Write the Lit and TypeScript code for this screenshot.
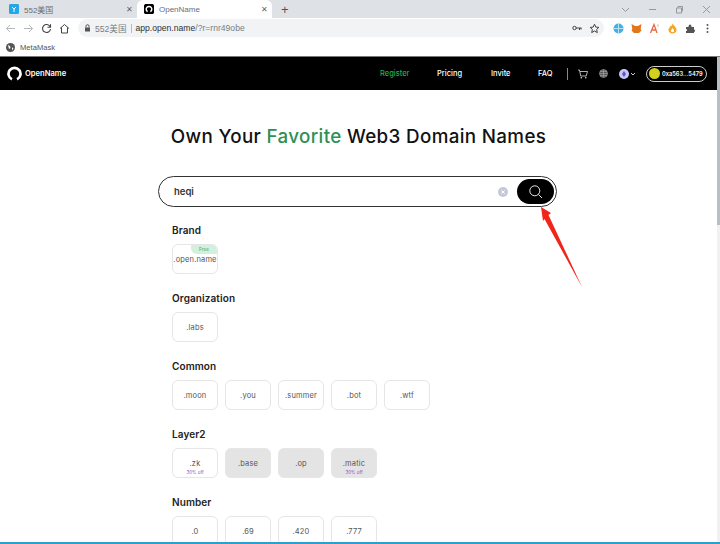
import { LitElement, html, css } from "lit";
import { customElement } from "lit/decorators.js";

type Chip = { n: string; free?: boolean; off?: boolean; dim?: boolean };
const sections: { t: string; chips: Chip[] }[] = [
  { t: "Brand", chips: [{ n: ".open.name", free: true }] },
  { t: "Organization", chips: [{ n: ".labs" }] },
  { t: "Common", chips: [{ n: ".moon" }, { n: ".you" }, { n: ".summer" }, { n: ".bot" }, { n: ".wtf" }] },
  { t: "Layer2", chips: [{ n: ".zk", off: true }, { n: ".base", dim: true }, { n: ".op", dim: true }, { n: ".matic", off: true, dim: true }] },
  { t: "Number", chips: [{ n: ".0" }, { n: ".69" }, { n: ".420" }, { n: ".777" }] },
];

@customElement("app-root")
export class AppRoot extends LitElement {
  static styles = css`
    :host { display: block; width: 720px; height: 544px; position: relative; overflow: hidden; background: #fff; font-family: "Inter", "Liberation Sans", sans-serif; }
    .page { height: 544px; display: flex; flex-direction: column; }
    .tabs { height: 18px; background: #dee1e6; display: flex; align-items: stretch; font: 8px "Liberation Sans", "Noto Sans CJK SC", sans-serif; color: #6b6f74; }
    .tab { width: 137px; display: flex; align-items: center; box-sizing: border-box; padding: 0 3px 0 9px; gap: 5px; }
    .tab.active { background: #fff; border-radius: 6px 6px 0 0; width: 135px; padding: 0 3px 0 7px; gap: 5px; }
    .tab .name { flex: 1; }
    .tab .x { font-size: 8px; color: #666; width: 10px; text-align: center; }
    .fav { width: 10px; height: 10px; border-radius: 1px; flex: none; display: block; }
    .plus { margin: 0 0 0 9px; align-self: center; font-size: 13px; color: #555; line-height: 13px; }
    .win { margin-left: auto; display: flex; align-items: center; gap: 18px; padding-right: 9px; }
    .toolbar { height: 20px; background: #fff; display: flex; align-items: center; padding-left: 5px; box-sizing: border-box; }
    .nav { display: flex; align-items: center; gap: 7px; width: 72px; flex: none; }
    .nav svg { display: block; }
    .omni { width: 168px; flex: 1; height: 18px; margin-left: 1px; background: #f1f3f4; border-radius: 9px; display: flex; align-items: center; padding: 0 4px 0 6px; font: 8.6px "Liberation Sans", "Noto Sans CJK SC", sans-serif; color: #7a7e83; }
    .omni b { font-weight: 400; color: #303134; }
    .sep { width: 1px; height: 9px; background: #bbb; margin: 0 4px; }
    .lock { margin-right: 4px; }
    .right { margin-left: auto; display: flex; align-items: center; gap: 7px; }
    .ext { display: flex; align-items: center; gap: 7px; padding: 0 8px 0 9px; }
    .ext svg { display: block; }
    .bm { height: 19px; display: flex; align-items: center; padding-left: 6px; gap: 5px; font: 7.6px "Liberation Sans", sans-serif; color: #555; box-sizing: border-box; border-bottom: 1px solid #777; }
    .body { flex: 1; min-height: 0; display: flex; overflow: hidden; }
    .col { flex: 1; min-width: 0; display: flex; flex-direction: column; }
    .scroll { width: 3px; flex: none; background: #f1f1f1; }
    .thumb { height: 168px; background: #b6bec6; }
    header { height: 33px; flex: none; background: #000; display: flex; align-items: center; color: #fff; padding: 0 10px 0 7px; font-weight: 500; }
    .logo { display: flex; align-items: center; gap: 3px; font-size: 7.6px; font-weight: 600; }
    .menu { margin-left: auto; display: flex; align-items: center; font-size: 7.5px; }
    .menu a { display: block; }
    .reg { color: #22b14c; width: 30px; margin-right: 27px; }
    .pri { width: 26px; margin-right: 28px; }
    .inv { width: 20px; margin-right: 27px; }
    .faq { width: 16px; margin-right: 13px; }
    .bar { width: 1px; height: 12px; background: #888; margin-right: 10px; }
    .wallet { margin-left: 10px; width: 57px; height: 14px; border: 1px solid #ccc; border-radius: 8px; display: flex; align-items: center; gap: 2px; font-size: 5.7px; font-weight: 600; padding-left: 2px; box-sizing: content-box; white-space: nowrap; }
    .coin { width: 11px; height: 11px; border-radius: 50%; background: #d3cf1f; flex: none; }
    .chain { display: flex; align-items: center; gap: 1px; margin-left: 11px; }
    .cart { margin-right: 11px; display: block; }
    main { flex: 1; min-height: 0; overflow: hidden; display: flex; flex-direction: column; }
    h1 { flex: none; margin: 35px 0 0; height: 24px; line-height: 24px; text-align: center; font-size: 18.8px; font-weight: 500; color: #111; letter-spacing: 0.35px; white-space: nowrap; }
    h1 span { color: #2f8f57; }
    .search { flex: none; margin: 27px 0 0 158px; width: 399px; height: 31px; box-sizing: border-box; border: 1px solid #333; border-radius: 16px; display: flex; align-items: center; padding: 0 2px 0 15px; }
    .q { flex: 1; font-size: 9.5px; font-weight: 600; color: #333; }
    .clear { display: block; margin-right: 9px; }
    .go { width: 37px; height: 25px; border-radius: 13px; background: #000; display: flex; align-items: center; justify-content: center; }
    .secs { flex: none; margin: 16px 0 0 172px; display: flex; flex-direction: column; gap: 17px; }
    h2 { margin: 0 0 7px; font-size: 10px; line-height: 14px; font-weight: 600; color: #222; letter-spacing: 0.1px; }
    .chips { display: flex; gap: 7px; }
    .chip { width: 46px; height: 30px; flex: none; box-sizing: border-box; border: 1px solid #e6e6e6; border-radius: 6px; display: flex; flex-direction: column; align-items: center; justify-content: center; font-size: 7.5px; letter-spacing: 0.15px; color: #555; position: relative; background: #fff; white-space: nowrap; }
    .chip.dim { background: #e4e4e4; }
    .free { position: absolute; top: 0; right: 0; width: 26px; height: 9px; background: #d3efdd; border-radius: 0 5px 0 6px; color: #3aa76d; font-size: 4.5px; line-height: 9px; text-align: center; }
    .off { position: absolute; bottom: 1px; left: 0; right: 0; text-align: center; font-size: 4.5px; line-height: 6px; color: #8a4fc0; letter-spacing: 0; }
    .arrow { position: absolute; left: 538px; top: 205px; display: block; }
    .task { height: 2px; flex: none; background: #2a9fd0; }
  `;

  render() {
    return html`<div class="page">
      <div class="tabs">
        <div class="tab"><svg class="fav" viewBox="0 0 10 10"><rect width="10" height="10" rx="1" fill="#22a7e8"/><path d="M3 3l2 2 2-2M5 5v3" stroke="#fff" fill="none"/></svg><span class="name">552美国</span><span class="x">✕</span></div>
        <div class="tab active"><svg class="fav" viewBox="0 0 10 10"><rect width="10" height="10" rx="1.5" fill="#000"/><path d="M3.6 7.6A2.8 2.8 0 1 1 6.4 7.6" stroke="#fff" fill="none" stroke-width="1.5"/></svg><span class="name">OpenName</span><span class="x">✕</span></div>
        <span class="plus">+</span>
        <div class="win">
          <svg width="9" height="9" viewBox="0 0 9 9"><path d="M1 3l3.500 3.500L8 3" stroke="#999" fill="none"/></svg>
          <svg width="9" height="9" viewBox="0 0 9 9"><path d="M1 4.500h7" stroke="#999"/></svg>
          <svg width="9" height="9" viewBox="0 0 9 9"><path d="M1.500 3h5v5h-5zM3 3V1.500h4.500V6H6.500" stroke="#999" fill="none"/></svg>
          <svg width="9" height="9" viewBox="0 0 9 9"><path d="M1 1l7 7M8 1l-7 7" stroke="#999"/></svg>
        </div>
      </div>
      <div class="toolbar">
        <div class="nav">
          <svg width="11" height="11" viewBox="0 0 11 11"><path d="M10 5.500H1.500M5 2L1.500 5.500 5 9" stroke="#b5b8bc" fill="none"/></svg>
          <svg width="11" height="11" viewBox="0 0 11 11"><path d="M1 5.500h8.500M6 2l3.500 3.500L6 9" stroke="#b5b8bc" fill="none"/></svg>
          <svg width="11" height="11" viewBox="0 0 11 11"><path d="M9 3.500A4 4 0 1 0 9.500 6M9.500 1.200v3H6.500" stroke="#444" fill="none" stroke-width="1.100"/></svg>
          <svg width="11" height="11" viewBox="0 0 11 11"><path d="M1 5.500L5.500 1.500 10 5.500M2.500 4.500v5.500h6V4.500" stroke="#444" fill="none"/></svg>
        </div>
        <div class="omni">
          <svg class="lock" width="7" height="8" viewBox="0 0 7 8"><rect x="1" y="3.500" width="5" height="4" fill="#555"/><path d="M2 3.500V2.200a1.500 1.500 0 0 1 3 0V3.500" stroke="#555" fill="none"/></svg>
          <span>552美国</span><span class="sep"></span><span><b>app.open.name</b>/?r=rnr49obe</span>
          <span class="right">
            <svg width="10" height="8" viewBox="0 0 10 8"><circle cx="2.500" cy="4" r="1.700" stroke="#444" fill="none"/><path d="M4 4h5.500M7.500 4v2M9 4v1.500" stroke="#444"/></svg>
            <svg width="11" height="11" viewBox="0 0 11 11"><path d="M5.500 1.200l1.300 2.900 3.100.3-2.300 2.100.7 3.100-2.800-1.600-2.800 1.600.7-3.100L1.100 4.400l3.100-.3z" stroke="#444" fill="none"/></svg>
          </span>
        </div>
        <div class="ext">
          <svg width="11" height="11" viewBox="0 0 11 11"><circle cx="5.500" cy="5.500" r="5" fill="#47b0e0"/><path d="M.5 5.500h10M5.500.5v10" stroke="#cfeaf7" stroke-width=".8"/></svg>
          <svg width="11" height="11" viewBox="0 0 11 11"><path d="M.5 1l3.500 2h3L10.500 1l-.8 5 .8 1.500L8 10H3L.5 7.500 1.300 6z" fill="#e2761b"/></svg>
          <svg width="11" height="11" viewBox="0 0 11 11"><path d="M1.500 10L5 1.500 8 10M3 7h4" stroke="#e8674a" fill="none" stroke-width="1.300"/><path d="M9 1.500v2" stroke="#e8a04a"/></svg>
          <svg width="11" height="11" viewBox="0 0 11 11"><path d="M5.500.5C7 3 10 4.500 9.500 7.500 9 9.500 7.500 10.500 5.500 10.500S2 9.500 1.500 7.500C1 5.500 3 5 3 3c1 .5 2 0 2.500-2.500z" fill="#f5a623"/><path d="M5.500 5C6.500 6.500 7.500 7 7 8.500 6.500 9.500 4.500 9.500 4 8.500 3.500 7 5 6.500 5.500 5z" fill="#fff"/></svg>
          <svg width="11" height="11" viewBox="0 0 11 11"><path d="M1 4h2.500C3.500 2.500 4 1.500 5 1.500S6.500 2.500 6.500 4H9v2.500C10.500 6.500 10.500 9 9 9v1H1V8c1.500 0 1.500-2 0-2z" fill="#555"/></svg>
          <svg width="9" height="11" viewBox="0 0 9 11"><circle cx="4.500" cy="2" r="1" fill="#555"/><circle cx="4.500" cy="5.500" r="1" fill="#555"/><circle cx="4.500" cy="9" r="1" fill="#555"/></svg>
        </div>
      </div>
      <div class="bm">
        <svg width="9" height="9" viewBox="0 0 9 9"><circle cx="4.500" cy="4.500" r="4.500" fill="#555"/><path d="M2 2l2 1 .5 2-1.500 1zM6 4.500l1.500.5L6 7.500z" fill="#fff"/></svg>
        <span>MetaMask</span>
      </div>
      <div class="body">
        <div class="col">
          <header>
            <div class="logo">
              <svg width="15" height="15" viewBox="0 0 15 15"><path d="M5 13.300A6 6 0 1 1 10 13.300" stroke="#fff" fill="none" stroke-width="2.700"/></svg>
              <span>OpenName</span>
            </div>
            <nav class="menu">
              <a class="reg">Register</a><a class="pri">Pricing</a><a class="inv">Invite</a><a class="faq">FAQ</a>
              <span class="bar"></span>
              <svg class="cart" width="10" height="10" viewBox="0 0 10 10"><path d="M0 1h1.500l1.200 6h5.500L9.500 2.500H2" stroke="#ddd" fill="none" stroke-width=".8"/><circle cx="3.300" cy="8.800" r=".8" fill="#ddd"/><circle cx="7.800" cy="8.800" r=".8" fill="#ddd"/></svg>
              <svg width="9" height="9" viewBox="0 0 9 9"><circle cx="4.500" cy="4.500" r="4" stroke="#aaa" fill="#555" stroke-width=".6"/><path d="M.5 4.500h8M4.500.5v8M1.200 2.500h6.600M1.200 6.500h6.600" stroke="#bbb" stroke-width=".5"/></svg>
              <span class="chain">
                <svg width="10" height="10" viewBox="0 0 10 10"><circle cx="5" cy="5" r="5" fill="#c8c6f5"/><path d="M5 2L3 5l2 3 2-3z" fill="#5a56c8"/></svg>
                <svg width="6" height="6" viewBox="0 0 6 6"><path d="M1 2l2 2 2-2" stroke="#ccc" fill="none"/></svg>
              </span>
              <span class="wallet"><span class="coin"></span><span>0xa563...5479</span></span>
            </nav>
          </header>
          <main>
            <h1>Own Your <span>Favorite</span> Web3 Domain Names</h1>
            <div class="search">
              <span class="q">heqi</span>
              <svg class="clear" width="10" height="10" viewBox="0 0 10 10"><circle cx="5" cy="5" r="5" fill="#c5c8d6"/><path d="M3.300 3.300l3.400 3.400M6.700 3.300L3.300 6.700" stroke="#fff"/></svg>
              <span class="go"><svg width="15" height="15" viewBox="0 0 15 15"><circle cx="6.800" cy="6.800" r="5" stroke="#fff" fill="none" stroke-width=".9"/><path d="M10.500 10.500L14 14" stroke="#fff" stroke-width=".9"/></svg></span>
            </div>
            <div class="secs">
              ${sections.map(s => html`<section>
                <h2>${s.t}</h2>
                <div class="chips">
                  ${s.chips.map(c => html`<div class="chip ${c.dim ? "dim" : ""}">
                    ${c.free ? html`<span class="free">Free</span>` : ""}
                    <span>${c.n}</span>
                    ${c.off ? html`<span class="off">30% off</span>` : ""}
                  </div>`)}
                </div>
              </section>`)}
            </div>
          </main>
        </div>
        <div class="scroll"><div class="thumb"></div></div>
      </div>
      <div class="task"></div>
    </div>
    <svg class="arrow" width="48" height="86" viewBox="0 0 48 86"><path d="M3 2L13 8 10.500 10 44 82 6.500 14 5 16z" fill="#f0261c"/></svg>`;
  }
}
